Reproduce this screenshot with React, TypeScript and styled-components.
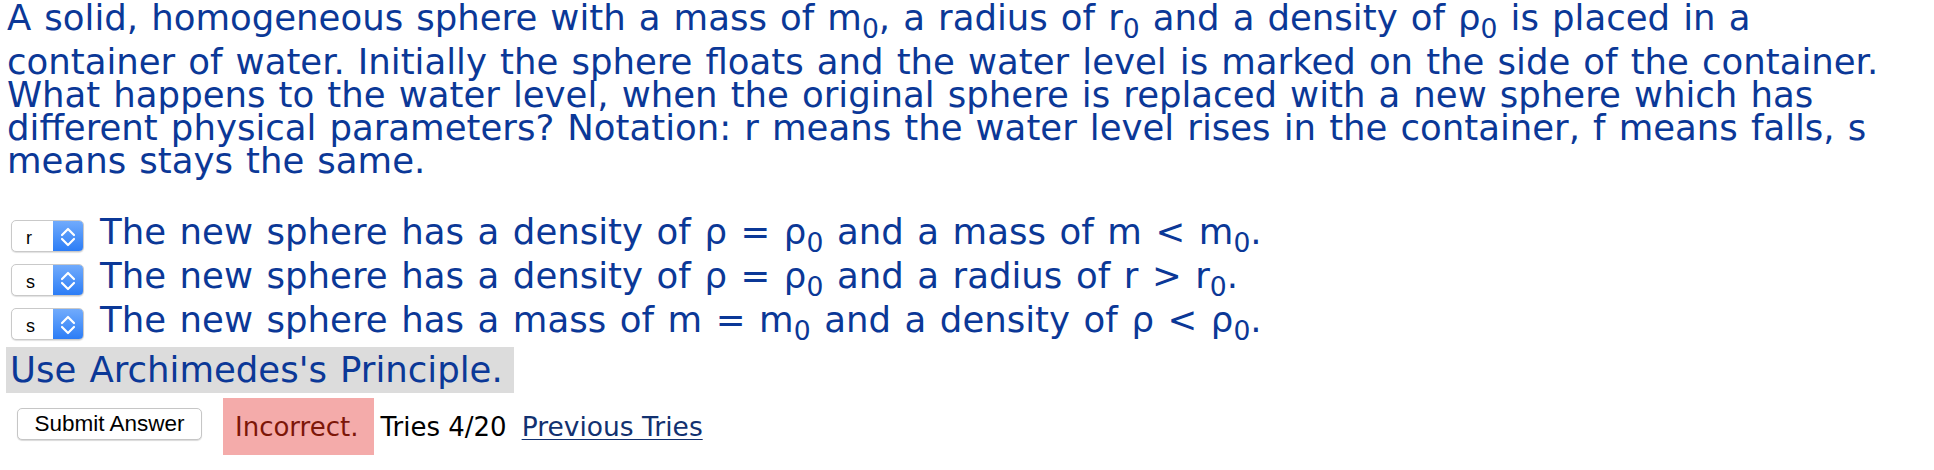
import React from "react";
import styled, { createGlobalStyle } from "styled-components";

const GlobalStyle = createGlobalStyle`
  html, body {
    margin: 0;
    padding: 0;
    background: #ffffff;
  }
  body {
    font-family: "DejaVu Sans", Verdana, sans-serif;
  }
`;

const Page = styled.div`
  padding: 1px 14px 0 7px;
  color: #0b3897;
  font-family: "DejaVu Sans", Verdana, sans-serif;
  font-size: 35.5px;
  word-spacing: 1.8px;
`;

const Question = styled.p`
  margin: 0;
  line-height: 33px;
`;

const Sub = styled.sub`
  font-size: 0.75em;
  vertical-align: sub;
  line-height: 33px;
`;

const Items = styled.div`
  margin-top: 38px;
  line-height: 33px;
`;

const Row = styled.div`
  line-height: 33px;
  white-space: nowrap;
  word-spacing: 2.3px;
`;

const Select = styled.span`
  display: inline-flex;
  vertical-align: baseline;
  width: 73px;
  height: 32px;
  box-sizing: border-box;
  margin-left: 4px;
  margin-right: 16px;
  border: 1px solid #c9c9c9;
  border-radius: 5px;
  box-shadow: 0 1px 1px rgba(0, 0, 0, 0.12);
  background: #ffffff;
  overflow: hidden;
  word-spacing: 0;
`;

const SelectValue = styled.span`
  flex: 1;
  padding-top: 4px;
  padding-left: 14px;
  font-family: "Liberation Sans", Arial, sans-serif;
  font-size: 18px;
  line-height: 26px;
  color: #000000;
`;

const SelectArrows = styled.span`
  display: flex;
  width: 30px;
  height: 100%;
  background: linear-gradient(#71abfc, #2c7df6);
`;

const Hint = styled.div`
  display: inline-block;
  margin-left: -1px;
  padding: 0 11px 0 4px;
  line-height: 46px;
  background: #dcdcdc;
`;

const Actions = styled.div`
  display: flex;
  align-items: center;
  margin-top: 5px;
  height: 57px;
  font-size: 26px;
  word-spacing: 0;
`;

const SubmitButton = styled.button`
  width: 185px;
  height: 32px;
  margin: -6px 21px 0 10px;
  padding: 0;
  background: #ffffff;
  border: 1px solid #c6c6c6;
  border-radius: 5px;
  box-shadow: 0 1px 1px rgba(0, 0, 0, 0.15);
  font-family: "Liberation Sans", Arial, sans-serif;
  font-size: 22.5px;
  color: #000000;
`;

const Status = styled.span`
  display: flex;
  align-items: center;
  align-self: stretch;
  padding: 0 16px 0 12px;
  background: #f4abaa;
  color: #7c1608;
`;

const Tries = styled.span`
  margin-left: 6px;
  color: #000000;
`;

const PrevLink = styled.a`
  margin-left: 15px;
  color: #123170;
  font-size: 26.5px;
  text-decoration: underline;
  text-decoration-thickness: 1px;
  text-underline-offset: 3px;
`;

const Arrows = () => (
  <svg width="30" height="30" viewBox="0 0 30 30" fill="none">
    <path d="M9 14 L15 8 L21 14" stroke="#ffffff" strokeWidth="2.2" strokeLinecap="round" strokeLinejoin="round" />
    <path d="M9 18 L15 24 L21 18" stroke="#ffffff" strokeWidth="2.2" strokeLinecap="round" strokeLinejoin="round" />
  </svg>
);

const Choice = ({ value }: { value: string }) => (
  <Select>
    <SelectValue>{value}</SelectValue>
    <SelectArrows>
      <Arrows />
    </SelectArrows>
  </Select>
);

export default function App() {
  return (
    <>
      <GlobalStyle />
      <Page>
        <Question>
          A solid, homogeneous sphere with a mass of m<Sub>0</Sub>, a radius of r<Sub>0</Sub> and a density of ρ<Sub>0</Sub> is placed in a
          container of water. Initially the sphere floats and the water level is marked on the side of the container.
          What happens to the water level, when the original sphere is replaced with a new sphere which has
          different physical parameters? Notation: r means the water level rises in the container, f means falls, s
          means stays the same.
        </Question>
        <Items>
          <Row>
            <Choice value="r" />
            The new sphere has a density of ρ = ρ<Sub>0</Sub> and a mass of m &lt; m<Sub>0</Sub>.
          </Row>
          <Row>
            <Choice value="s" />
            The new sphere has a density of ρ = ρ<Sub>0</Sub> and a radius of r &gt; r<Sub>0</Sub>.
          </Row>
          <Row>
            <Choice value="s" />
            The new sphere has a mass of m = m<Sub>0</Sub> and a density of ρ &lt; ρ<Sub>0</Sub>.
          </Row>
        </Items>
        <Hint>Use Archimedes's Principle.</Hint>
        <Actions>
          <SubmitButton type="button">Submit Answer</SubmitButton>
          <Status>Incorrect.</Status>
          <Tries>Tries 4/20</Tries>
          <PrevLink href="#">Previous Tries</PrevLink>
        </Actions>
      </Page>
    </>
  );
}
